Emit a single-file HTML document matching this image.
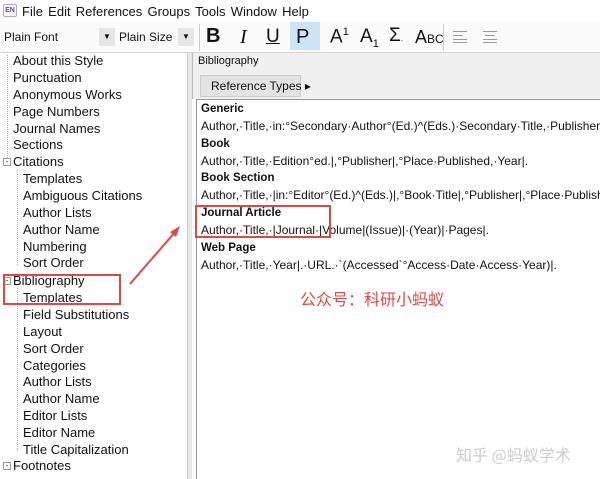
<!DOCTYPE html>
<html><head><meta charset="utf-8"><style>
*{margin:0;padding:0;box-sizing:border-box}
body{width:600px;height:479px;overflow:hidden;background:#fff;font-family:"Liberation Sans","Noto Sans CJK SC",sans-serif;position:relative;color:#111}
.a{position:absolute;white-space:nowrap}
.menu{font-size:13px;top:4px;word-spacing:-1px}
.tree{font-size:13px;line-height:16.87px}
.r{font-size:12px;line-height:16.85px}
.b{font-weight:bold;font-size:11.5px}
</style></head><body>
<div class="a" style="left:3px;top:4px;width:14px;height:13px;border:1px solid #b8a8d8;border-radius:2px;font-size:7px;color:#5a3fa0;font-weight:bold;line-height:11px;text-align:center">EN</div>
<div class="a menu" style="left:22px">File&nbsp; Edit&nbsp; References&nbsp; Groups&nbsp; Tools&nbsp; Window&nbsp; Help</div>
<div class="a" style="left:0;top:22px;width:600px;height:31px;background:#fbfbfb;border-bottom:1px solid #d4d4d4"></div>
<div class="a" style="left:4px;top:30px;font-size:12px">Plain Font</div>
<div class="a" style="left:99px;top:28px;width:16px;height:18px;background:#e6e6e6;font-size:8px;text-align:center;line-height:18px">▼</div>
<div class="a" style="left:119px;top:30px;font-size:12px">Plain Size</div>
<div class="a" style="left:178px;top:28px;width:16px;height:18px;background:#e6e6e6;font-size:8px;text-align:center;line-height:18px">▼</div>
<div class="a" style="left:199px;top:24px;width:1px;height:27px;background:#ccc"></div>
<div class="a" style="left:206px;top:25px;font-size:20px;font-weight:bold">B</div>
<div class="a" style="left:240px;top:26px;font-size:20px;font-style:italic;font-family:'Liberation Serif'">I</div>
<div class="a" style="left:266px;top:26px;font-size:19px;text-decoration:underline">U</div>
<div class="a" style="left:290px;top:22px;width:30px;height:28px;background:#cce4f7"></div>
<div class="a" style="left:296px;top:26px;font-size:20px">P</div>
<div class="a" style="left:330px;top:26px;font-size:19px">A<sup style="font-size:11px">1</sup></div>
<div class="a" style="left:360px;top:26px;font-size:19px">A<sub style="font-size:11px">1</sub></div>
<div class="a" style="left:389px;top:25px;font-size:19px">Σ<span style="font-size:8px">.</span></div>
<div class="a" style="left:415px;top:27px;font-size:18px">A<span style="font-size:12px">BC</span></div>
<div class="a" style="left:443px;top:24px;width:1px;height:27px;background:#ccc"></div>
<div class="a" style="left:453px;top:31px;width:14px;height:12px;border-top:1px solid #999;border-bottom:1px solid #999"><div style="margin-top:3px;border-top:1px solid #999;width:10px"></div><div style="margin-top:3px;border-top:1px solid #999"></div></div>
<div class="a" style="left:483px;top:31px;width:14px;height:12px;border-top:1px solid #999;border-bottom:1px solid #999"><div style="margin:3px 2px 0;border-top:1px solid #999"></div><div style="margin-top:3px;border-top:1px solid #999"></div></div>

<div class="a" style="left:187px;top:53px;width:5px;height:426px;background:#e8e8e8;border-left:1px solid #ccc"></div>
<div class="a" style="left:192px;top:53px;width:408px;height:46px;background:#f0f0f0;border-left:1px solid #bbb"></div>
<div class="a" style="left:198px;top:55px;font-size:11px">Bibliography</div>
<div class="a" style="left:200px;top:75px;width:101px;height:22px;background:#e3e3e3;border:1px solid #ccc;font-size:12px;line-height:20px;padding-left:10px">Reference Types ▸</div>
<div class="a" style="left:196px;top:99px;width:404px;height:380px;background:#fff;border-left:1px solid #999;border-top:1px solid #999"></div>

<div class="a tree" style="left:13px;top:53px">About this Style<br>Punctuation<br>Anonymous Works<br>Page Numbers<br>Journal Names<br>Sections<br>Citations</div>
<div class="a tree" style="left:23px;top:171px">Templates<br>Ambiguous Citations<br>Author Lists<br>Author Name<br>Numbering<br>Sort Order</div>
<div class="a tree" style="left:13px;top:273px">Bibliography</div>
<div class="a tree" style="left:23px;top:290px">Templates<br>Field Substitutions<br>Layout<br>Sort Order<br>Categories<br>Author Lists<br>Author Name<br>Editor Lists<br>Editor Name<br>Title Capitalization</div>
<div class="a tree" style="left:13px;top:458px">Footnotes</div>
<div class="a" style="left:3px;top:158px;width:8px;height:8px;border:1px solid #999;font-size:8px;line-height:6px;text-align:center">-</div>
<div class="a" style="left:3px;top:277px;width:8px;height:8px;border:1px solid #999;font-size:8px;line-height:6px;text-align:center">-</div>
<div class="a" style="left:3px;top:462px;width:8px;height:8px;border:1px solid #999;font-size:8px;line-height:6px;text-align:center">-</div>
<div class="a" style="left:7px;top:55px;width:1px;height:103px;border-left:1px dotted #aaa"></div>
<div class="a" style="left:17px;top:170px;width:1px;height:95px;border-left:1px dotted #aaa"></div>
<div class="a" style="left:17px;top:288px;width:1px;height:163px;border-left:1px dotted #aaa"></div>

<div class="a r" style="left:201px;top:100px"><span class="b">Generic</span><br>Author,·Title,·in:°Secondary·Author°(Ed.)^(Eds.)·Secondary·Title,·Publisher,·Pl<br><span class="b">Book</span><br>Author,·Title,·Edition°ed.|,°Publisher|,°Place·Published,·Year|.<br><span class="b">Book Section</span><br>Author,·Title,·|in:°Editor°(Ed.)^(Eds.)|,°Book·Title|,°Publisher|,°Place·Published,·<br><span class="b">Journal Article</span><br>Author,·Title,·|Journal·|Volume|(Issue)|·(Year)|·Pages|.<br><span class="b">Web Page</span><br>Author,·Title,·Year|.·URL.·`(Accessed`°Access·Date·Access·Year)|.</div>

<div class="a" style="left:3px;top:274px;width:118px;height:31px;border:2px solid #e04848"></div>
<div class="a" style="left:195px;top:205px;width:136px;height:33px;border:2px solid #e04848"></div>
<svg class="a" style="left:0;top:0" width="600" height="479"><line x1="130" y1="284" x2="176" y2="231" stroke="#e04848" stroke-width="2"/><polygon points="180,226 170,232 176,237" fill="#e04848"/></svg>
<div class="a" style="left:300px;top:286px;font-size:16px;color:#e04848;font-family:'Noto Sans CJK SC',sans-serif">公众号：科研小蚂蚁</div>
<div class="a" style="left:456px;top:442px;font-size:16px;color:#ccc;font-family:'Noto Sans CJK SC',sans-serif">知乎 @蚂蚁学术</div>
</body></html>
